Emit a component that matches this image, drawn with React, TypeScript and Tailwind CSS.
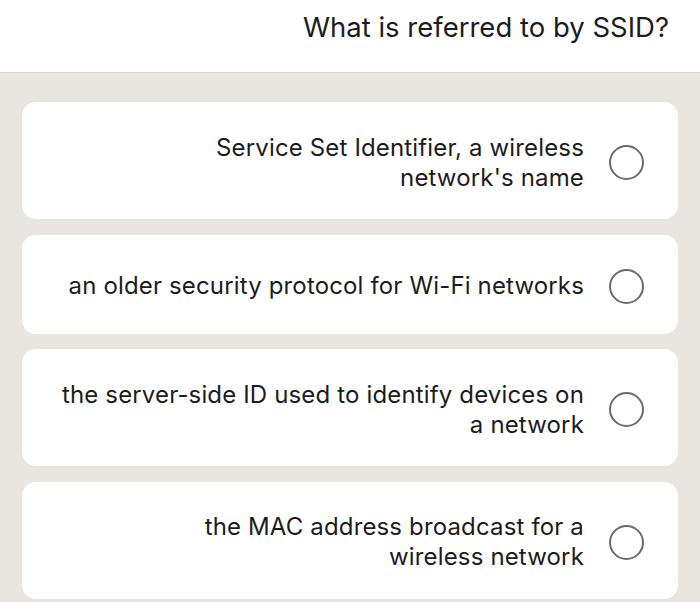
const opcoes = [
  ["Service Set Identifier, a wireless", "network's name"],
  ["an older security protocol for Wi-Fi networks"],
  ["the server-side ID used to identify devices on", "a network"],
  ["the MAC address broadcast for a", "wireless network"],
];

function Radio() {
  return <span className="h-[35px] w-[35px] flex-shrink-0 rounded-full border-2 border-[#6b6b6b]" />;
}

export default function App() {
  return (
    <div className="min-h-[602px] bg-[#e9e6e0] font-['Inter',sans-serif] text-[#1c1c1e]">
      <header className="flex h-[73px] items-center justify-end border-b border-[#d9d5cd] bg-white pb-[16px] pr-[31px]">
        <h1 className="text-[27.5px] font-normal">What is referred to by SSID?</h1>
      </header>
      <div className="flex flex-col gap-[15.6px] px-[22px] pt-[29px]">
        {opcoes.map((linhas) => (
          <div
            key={linhas[0]}
            className="flex min-h-[99px] items-center justify-end gap-[25px] rounded-[14px] bg-white pb-[26.5px] pl-[30px] pr-[34px] pt-[30.5px]"
          >
            <p className="text-right text-[24px] leading-[30px] tracking-[0.15px]">
              {linhas.map((l) => (
                <span key={l} className="block">
                  {l}
                </span>
              ))}
            </p>
            <Radio />
          </div>
        ))}
      </div>
    </div>
  );
}
